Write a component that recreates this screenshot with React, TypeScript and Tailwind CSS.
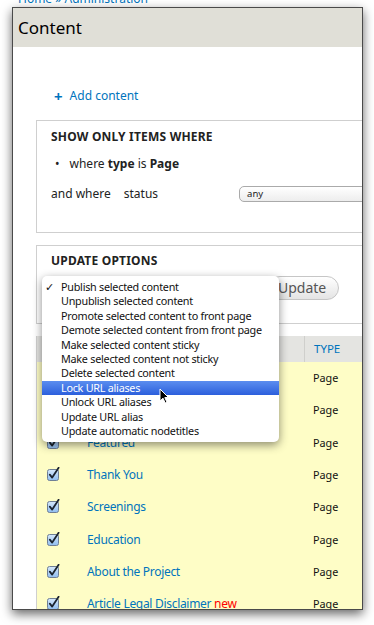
import React from 'react'

const font = { fontFamily: '"Noto Sans", "DejaVu Sans", sans-serif' }

const menuItems = [
  'Publish selected content',
  'Unpublish selected content',
  'Promote selected content to front page',
  'Demote selected content from front page',
  'Make selected content sticky',
  'Make selected content not sticky',
  'Delete selected content',
  'Lock URL aliases',
  'Unlock URL aliases',
  'Update URL alias',
  'Update automatic nodetitles',
]

const rows = [
  { title: 'Homepage Featured' },
  { title: 'Upcoming Screening' },
  { title: 'Featured' },
  { title: 'Thank You' },
  { title: 'Screenings' },
  { title: 'Education' },
  { title: 'About the Project' },
  { title: 'Article Legal Disclaimer', isNew: true },
]

function Checkbox() {
  return (
    <svg width="13" height="14" viewBox="0 0 13 14" className="block">
      <defs>
        <linearGradient id="cb" x1="0" y1="0" x2="0" y2="1">
          <stop offset="0" stopColor="#d6e8fb" />
          <stop offset="1" stopColor="#8fbdf0" />
        </linearGradient>
      </defs>
      <rect x="0.5" y="2.5" width="11" height="11" rx="2" fill="url(#cb)" stroke="#6f7f95" />
      <path d="M2.8 7.6 L5.2 10.6 L11.6 0.8" fill="none" stroke="#1b2430" strokeWidth="1.8" strokeLinecap="round" strokeLinejoin="round" />
    </svg>
  )
}

function Cursor() {
  return (
    <svg width="10" height="16" viewBox="0 0 10 16">
      <path d="M1 1 L1 13 L4 10.2 L6.2 15 L8 14.2 L5.8 9.6 L9.4 9.4 Z" fill="#000" stroke="#fff" strokeWidth="1" strokeLinejoin="round" />
    </svg>
  )
}

export default function App() {
  return (
    <div className="w-[374px] h-[625px] bg-white overflow-hidden" style={font}>
      {/* breadcrumb, mostly cut off at the top */}
      <div className="h-[7px] overflow-hidden pl-[18px]">
        <div className="-mt-[9px] text-[12px] leading-[15px] text-[#0074bd]">Home » Administration</div>
      </div>

      <div className="ml-[12px] w-[351px] h-[603px] border border-[#4a4a4a] bg-white overflow-hidden relative shadow-[0_4px_10px_rgba(0,0,0,0.6)]">
        <div className="h-[39px] bg-[#e0dfd7] pl-[5px] pt-[9px]">
          <h1 className="text-[17px] leading-[22px] text-black">Content</h1>
        </div>

        <div className="w-[420px]">
          <div className="pl-[41px] pt-[41px] flex items-center gap-[7px] h-[57px] text-[12px] leading-[16px] text-[#0074bd]">
            <span className="font-bold text-[15px] leading-[16px]">+</span>
            <span>Add content</span>
          </div>

          {/* filter fieldset */}
          <div className="ml-[23px] mt-[16px] h-[113px] border border-[#cfcfcf] pl-[14px] pt-[8px] text-[12px] text-[#222]">
            <div className="font-bold uppercase leading-[16px] tracking-[0.2px]">Show only items where</div>
            <div className="mt-[11px] flex items-center leading-[16px]">
              <span className="ml-[4px] mr-[10px]">•</span>
              <span>where <b>type</b> is <b>Page</b></span>
            </div>
            <div className="mt-[14px] flex items-center leading-[16px]">
              <span>and where</span>
              <span className="ml-[13px]">status</span>
              <div className="ml-[81px] w-[170px] h-[16px] rounded-l-[5px] border border-[#aaa] bg-gradient-to-b from-white to-[#ededed] pl-[7px] text-[9.5px] leading-[14px]">any</div>
            </div>
          </div>

          {/* update options fieldset */}
          <div className="ml-[23px] mt-[12px] h-[79px] border border-[#cfcfcf] pl-[14px] pt-[7px] text-[12px] text-[#222]">
            <div className="font-bold uppercase leading-[16px] tracking-[0.2px]">Update options</div>
            <div className="mt-[7px] flex items-center">
              <div className="w-[212px] h-[20px] rounded-[4px] border border-[#bbb] bg-gradient-to-b from-white to-[#eee] pl-[10px] text-[10.2px] leading-[18px]">Publish selected content</div>
              <div className="ml-[5px] h-[24px] w-[71px] rounded-full border border-[#c6c6c6] bg-gradient-to-b from-white to-[#e4e4e4] text-[14px] leading-[22px] text-[#555] pl-[9px]">Update</div>
            </div>
          </div>

          {/* content table */}
          <div className="ml-[23px] mt-[12px] border-l border-[#cfcfcf]">
            <div className="h-[26px] bg-[#e4e4e1] flex items-center text-[11px]">
              <div className="w-[50px] pl-[10px]"><Checkbox /></div>
              <div className="w-[217px] text-[#0074bd] font-bold">TITLE</div>
              <div className="h-full border-l border-[#cfcfcc] pl-[9px] flex items-center text-[#0074bd] text-[11.5px]">TYPE</div>
            </div>
            {rows.map(r => (
              <div key={r.title} className="h-[32.3px] bg-[#fefdc6] flex items-center text-[12px] tracking-[-0.3px]">
                <div className="w-[50px] pl-[10px] -mt-[2px]"><Checkbox /></div>
                <div className="w-[226px] text-[#0074bd]">
                  {r.title}
                  {r.isNew && <span className="text-[#ff0000]"> new</span>}
                </div>
                <div className="text-[10.8px] tracking-normal text-[#111]">Page</div>
              </div>
            ))}
          </div>
        </div>

        {/* open select popup */}
        <div className="absolute left-[29px] top-[268px] w-[237px] py-[4px] bg-white rounded-[5px] shadow-[0_3px_10px_rgba(0,0,0,0.45)] text-[10.8px] tracking-[-0.25px] text-[#111]">
          {menuItems.map((m, i) => (
            <div
              key={m}
              className={
                i === 7
                  ? 'relative h-[14.4px] leading-[14.4px] pl-[19px] text-white bg-gradient-to-b from-[#5b8def] to-[#2c5fdc]'
                  : 'relative h-[14.4px] leading-[14.4px] pl-[19px]'
              }
            >
              {i === 0 && <span className="absolute left-[3px] top-0 font-bold text-[11px]">✓</span>}
              {m}
              {i === 7 && (
                <div className="absolute left-[117px] top-[7px]"><Cursor /></div>
              )}
            </div>
          ))}
        </div>
      </div>
    </div>
  )
}
